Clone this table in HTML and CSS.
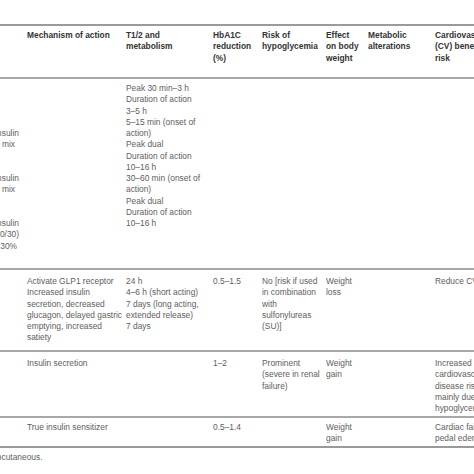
FILE: index.html
```html
<!DOCTYPE html>
<html>
<head>
<meta charset="utf-8">
<link rel="stylesheet" href="styles.css">
</head>
<body>
<div class="page">
<table class="drugs">
<colgroup>
<col class="c0"><col class="c1"><col class="c2"><col class="c3"><col class="c4"><col class="c5"><col class="c6"><col class="c7">
</colgroup>
<thead>
<tr class="head">
<th class="first"></th>
<th>Mechanism of action</th>
<th>T1/2 and<br>metabolism</th>
<th>HbA1C<br>reduction<br>(%)</th>
<th>Risk of<br>hypoglycemia</th>
<th>Effect<br>on body<br>weight</th>
<th>Metabolic<br>alterations</th>
<th>Cardiovascular<br>(CV) benefit/<br>risk</th>
</tr>
</thead>
<tbody>
<tr class="r1">
<td class="first">&nbsp;<br>&nbsp;<br>&nbsp;<br>&nbsp;<br>Premixed insulin<br><span class="tail">lispro mix</span><br>&nbsp;<br>&nbsp;<br>Premixed insulin<br><span class="tail">aspart mix</span><br>&nbsp;<br>&nbsp;<br>Premixed insulin<br>NPH/regular (70/30)<br><span class="tail2">70% and 30%</span></td>
<td></td>
<td>Peak 30 min–3 h<br>Duration of action<br>3–5 h<br>5–15 min (onset of<br>action)<br>Peak dual<br>Duration of action<br>10–16 h<br>30–60 min (onset of<br>action)<br>Peak dual<br>Duration of action<br>10–16 h</td>
<td></td><td></td><td></td><td></td><td></td>
</tr>
<tr class="r2">
<td class="first"></td>
<td>Activate GLP1 receptor<br>Increased insulin<br>secretion, decreased<br>glucagon, delayed gastric<br>emptying, increased<br>satiety</td>
<td>24 h<br>4–6 h (short acting)<br>7 days (long acting,<br>extended release)<br>7 days</td>
<td>0.5–1.5</td>
<td>No [risk if used<br>in combination<br>with<br>sulfonylureas<br>(SU)]</td>
<td>Weight<br>loss</td>
<td></td>
<td>Reduce CV risk</td>
</tr>
<tr class="r3">
<td class="first"></td>
<td>Insulin secretion</td>
<td></td>
<td>1–2</td>
<td>Prominent<br>(severe in renal<br>failure)</td>
<td>Weight<br>gain</td>
<td></td>
<td>Increased<br>cardiovascular<br>disease risk,<br>mainly due to<br>hypoglycemia</td>
</tr>
<tr class="r4">
<td class="first"></td>
<td>True insulin sensitizer</td>
<td></td>
<td>0.5–1.4</td>
<td></td>
<td>Weight<br>gain</td>
<td></td>
<td>Cardiac failure,<br>pedal edema</td>
</tr>
</tbody>
</table>
<p class="note">subcutaneous.</p>
</div>
</body>
</html>
```

FILE: styles.css
```css
html, body {
  margin: 0;
  padding: 0;
  background: #ffffff;
}
body {
  width: 474px;
  height: 474px;
  overflow: hidden;
  font-family: "Liberation Sans", Arial, sans-serif;
  font-size: 8.4px;
  line-height: 11.25px;
  color: #5e5e5e;
}
.page {
  margin-left: -80px;
  padding-top: 24px;
  width: 680px;
}
.drugs {
  border-collapse: collapse;
  table-layout: fixed;
  width: 680px;
  border-top: 2px solid #9a9a9a;
  border-bottom: 2px solid #9a9a9a;
}
.c0 { width: 107px; }
.c1 { width: 99px; }
.c2 { width: 87px; }
.c3 { width: 49px; }
.c4 { width: 64px; }
.c5 { width: 42px; }
.c6 { width: 67px; }
.c7 { width: 165px; }
.drugs th, .drugs td {
  text-align: left;
  vertical-align: top;
  white-space: nowrap;
  overflow: visible;
  padding: 4px 0 0 0;
}
.drugs th {
  font-weight: bold;
  color: #333333;
}
.drugs .first {
  text-align: right;
  padding-right: 8px;
}
.tail {
  margin-right: 4px;
}
.tail2 {
  margin-right: 2px;
}
.drugs tbody tr td {
  border-top: 2px solid #a8a8a8;
}
.head { height: 53px; }
.r1 { height: 191px; }
.r2 { height: 82px; }
.r2 td { padding-top: 6px; }
.r3 { height: 66px; }
.r3 td { padding-top: 6px; }
.r4 { height: 30px; }
.r4 td { padding-top: 4px; }
.note {
  margin: 4px 0 0 68px;
  color: #5e5e5e;
}
```
